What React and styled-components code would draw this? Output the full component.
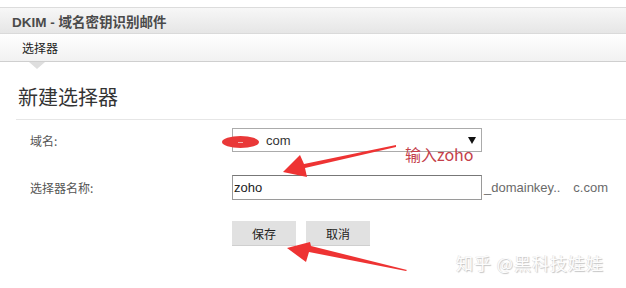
import React from "react";
import styled, { createGlobalStyle } from "styled-components";

const GlobalStyle = createGlobalStyle`
  body {
    margin: 0;
    background: #fff;
    font-family: "Liberation Sans", "Noto Sans CJK SC", sans-serif;
  }
`;

const Page = styled.div`
  position: relative;
  width: 626px;
  height: 288px;
  overflow: hidden;
  padding-top: 7px;
  box-sizing: border-box;
`;

const TitleBar = styled.div`
  height: 27px;
  border-top: 1px solid #dcdcdc;
  border-bottom: 1px solid #dadada;
  background: linear-gradient(#f7f7f7, #e6e6e6);
  display: flex;
  align-items: center;
  padding-left: 12px;
  font-size: 13.5px;
  font-weight: bold;
  color: #4a4a4a;
  box-sizing: border-box;
`;

const TabBar = styled.div`
  position: relative;
  height: 28px;
  border-bottom: 1px solid #cfcfcf;
  background: linear-gradient(#ffffff, #f1f1f1);
  display: flex;
  align-items: center;
  padding-left: 22px;
  font-size: 12px;
  color: #222;
  box-sizing: border-box;

  &::after {
    content: "";
    position: absolute;
    left: 29px;
    bottom: -8px;
    border-left: 8px solid transparent;
    border-right: 8px solid transparent;
    border-top: 7px solid #dedede;
  }
`;

const Content = styled.div`
  padding: 20px 0 0 16px;
`;

const Heading = styled.h2`
  margin: 0;
  padding: 0 0 8px 2px;
  font-size: 20px;
  font-weight: normal;
  color: #333;
  border-bottom: 1px solid #e6e6e6;
  font-family: "Noto Sans CJK SC", sans-serif;
`;

const Form = styled.div`
  display: flex;
  flex-direction: column;
  gap: 23px;
  padding: 8px 0 0 14px;
`;

const Row = styled.div`
  display: flex;
  align-items: center;
  height: 24px;
`;

const Label = styled.div`
  width: 202px;
  font-size: 12px;
  color: #555;
  font-family: "Noto Sans CJK SC", sans-serif;
`;

const SelectBox = styled.div`
  position: relative;
  width: 250px;
  height: 24px;
  border: 1px solid #ababab;
  box-sizing: border-box;
  display: flex;
  align-items: center;
  padding-left: 33px;
  font-size: 13px;
  color: #333;

  &::after {
    content: "";
    position: absolute;
    right: 5px;
    top: 8px;
    border-left: 4px solid transparent;
    border-right: 4px solid transparent;
    border-top: 7px solid #111;
  }
`;

const Redact = styled.span`
  position: absolute;
  left: -11px;
  top: 7px;
  width: 37px;
  height: 12px;
  border-radius: 50%;
  background: #e93838;

  &::after {
    content: "";
    position: absolute;
    left: 16px;
    top: 6px;
    width: 5px;
    height: 1px;
    background: #f4b0b0;
  }
`;

const TextInput = styled.div`
  width: 250px;
  height: 25px;
  border: 1px solid #9a9a9a;
  border-top-color: #777;
  box-sizing: border-box;
  display: flex;
  align-items: center;
  padding-left: 1px;
  font-size: 13px;
  color: #222;
`;

const Suffix = styled.span`
  margin-left: ${(p) => p.$gap}px;
  font-size: 13px;
  color: #6a6a6a;
`;

const Buttons = styled.div`
  display: flex;
  gap: 10px;
  padding-left: 202px;
  margin-top: -1px;
`;

const Button = styled.div`
  width: 64px;
  height: 25px;
  background: #e1e1e1;
  border-bottom: 1px solid #cfcfcf;
  box-sizing: border-box;
  display: flex;
  align-items: center;
  justify-content: center;
  font-size: 12px;
  color: #222;
  font-family: "Noto Sans CJK SC", sans-serif;
`;

const Overlay = styled.svg`
  position: absolute;
  left: 0;
  top: 0;
  pointer-events: none;
`;

const Note = styled.div`
  position: absolute;
  left: 405px;
  top: 142px;
  font-size: 16px;
  color: #c4404a;
  font-family: "Noto Sans CJK SC", sans-serif;
`;

const Watermark = styled.div`
  position: absolute;
  left: 456px;
  top: 250px;
  font-size: 17px;
  color: #fdfdfd;
  letter-spacing: 1px;
  text-shadow: 1px 1px 1px #c4c4c4, -0.5px -0.5px 0 #dedede;
  font-family: "Noto Sans CJK SC", sans-serif;
`;

export default function App() {
  return (
    <Page>
      <GlobalStyle />
      <TitleBar>DKIM - 域名密钥识别邮件</TitleBar>
      <TabBar>选择器</TabBar>
      <Content>
        <Heading>新建选择器</Heading>
        <Form>
          <Row>
            <Label>域名:</Label>
            <SelectBox>
              <Redact />
              com
            </SelectBox>
          </Row>
          <Row>
            <Label>选择器名称:</Label>
            <TextInput>zoho</TextInput>
            <Suffix $gap={2}>_domainkey..</Suffix>
            <Suffix $gap={13}>c.com</Suffix>
          </Row>
          <Buttons>
            <Button>保存</Button>
            <Button>取消</Button>
          </Buttons>
        </Form>
      </Content>
      <Overlay width="626" height="288" viewBox="0 0 626 288">
        <path
          d="M396 145 L304 164 L300 155 L283 172 L307 177 L305 168 L396 147 Z"
          fill="#ee3333"
        />
        <path
          d="M407 270 L311 246 L310 242 L287 248 L306 262 L309 252 L406 271 Z"
          fill="#ee3333"
        />
      </Overlay>
      <Note>输入zoho</Note>
      <Watermark>知乎 @黑科技娃娃</Watermark>
    </Page>
  );
}
